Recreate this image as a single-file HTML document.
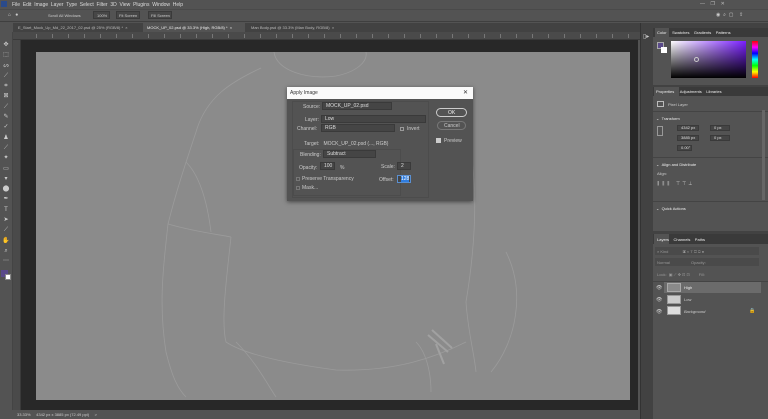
<!DOCTYPE html><html><head><style>
*{margin:0;padding:0;box-sizing:border-box}
body{width:768px;height:419px;background:#535353;position:relative;overflow:hidden;font-family:"Liberation Sans",sans-serif;font-size:5px;color:#ddd}
.a{position:absolute}
.inp{position:absolute;background:#454545;border:1px solid #3a3a3a;color:#ddd;font-size:5px;padding-left:3px;line-height:6px}
.t{position:absolute;font-size:5px;color:#ccc;white-space:nowrap}
</style></head><body>
<div class="a" style="left:0;top:0;width:768px;height:9px;background:#535353"></div>
<div class="a" style="left:1px;top:1px;width:6px;height:6px;background:#2a4a8a"></div>
<div class="t" style="left:12px;top:2px;color:#ddd">File &nbsp;Edit &nbsp;Image &nbsp;Layer &nbsp;Type &nbsp;Select &nbsp;Filter &nbsp;3D &nbsp;View &nbsp;Plugins &nbsp;Window &nbsp;Help</div>
<div class="t" style="left:700px;top:1px;color:#bbb">—&nbsp;&nbsp;&nbsp;&nbsp;❐&nbsp;&nbsp;&nbsp;&nbsp;✕</div>
<div class="a" style="left:0;top:9px;width:768px;height:13px;background:#535353;border-top:1px solid #4a4a4a;border-bottom:1px solid #3f3f3f"></div>
<div class="t" style="left:8px;top:12px">⌂ &nbsp;&nbsp;●</div>
<div class="t" style="left:48px;top:13px;font-size:4px">Scroll All Windows</div>
<div class="a" style="left:93px;top:11px;width:17px;height:8px;background:#474747;border:1px solid #3a3a3a"></div>
<div class="t" style="left:97px;top:13px;font-size:4px">100%</div>
<div class="a" style="left:116px;top:11px;width:24px;height:8px;background:#474747;border:1px solid #3a3a3a"></div>
<div class="t" style="left:119px;top:13px;font-size:4px">Fit Screen</div>
<div class="a" style="left:148px;top:11px;width:24px;height:8px;background:#474747;border:1px solid #3a3a3a"></div>
<div class="t" style="left:151px;top:13px;font-size:4px">Fill Screen</div>
<div class="t" style="left:716px;top:12px;color:#ccc">◉ &nbsp;⌕ &nbsp;▢ &nbsp;&nbsp;&nbsp;⇪</div>
<div class="a" style="left:13px;top:23px;width:627px;height:9px;background:#424242"></div>
<div class="t" style="left:18px;top:25px;font-size:4px;color:#bbb">E_Start_Mock_Up_Md_22_2017_02.psd @ 25% (RGB/8) * &nbsp;×</div>
<div class="a" style="left:143px;top:23px;width:102px;height:9px;background:#535353"></div>
<div class="t" style="left:147px;top:25px;font-size:4px;color:#eee">MOCK_UP_02.psd @ 33.3% (High, RGB/8) * &nbsp;×</div>
<div class="t" style="left:251px;top:25px;font-size:4px;color:#bbb">Man Body.psd @ 33.3% (Man Body, RGB/8) &nbsp;×</div>
<div class="a" style="left:13px;top:32px;width:627px;height:8px;background:#4a4a4a;border-bottom:1px solid #3a3a3a"></div>
<div class="a" style="left:13px;top:40px;width:8px;height:370px;background:#4a4a4a;border-right:1px solid #3a3a3a"></div>
<div class="a" style="left:21px;top:34px;width:619px;height:4px;background:repeating-linear-gradient(90deg,transparent 0 15px,#777 15px 16px)"></div>
<div class="a" style="left:21px;top:40px;width:617px;height:370px;background:#282828"></div>
<div class="a" style="left:36px;top:52px;width:594px;height:348px;background:#8b8b8b;overflow:hidden">
<svg width="594" height="348" style="position:absolute;left:0;top:0" fill="none" stroke-width="0.8" opacity="0.6">
<g stroke="#a6a6a6">
<path d="M238 0 C240 18 270 28 300 24 C320 20 332 10 330 0"/>
<path d="M225 16 C195 30 170 45 160 80 C150 110 140 140 132 172 C160 180 180 182 195 185"/>
<path d="M132 172 C128 210 122 250 130 300 C135 320 140 335 150 345"/>
<path d="M195 185 C190 230 185 270 190 290 C205 300 240 310 300 318 C360 320 400 305 430 290"/>
<path d="M150 110 C160 120 170 140 175 180"/>
<path d="M420 50 C440 90 445 160 430 250 C432 280 438 300 440 320"/>
<path d="M470 200 C490 240 480 290 455 320"/>
<path d="M200 290 C220 310 230 330 240 345"/>
<path d="M380 290 C390 300 395 320 395 340"/>
</g>
<g stroke="#b0b0b0" stroke-width="2"><path d="M392 283 L412 300 M396 278 L416 296 M400 292 L408 312"/></g>
</svg>
</div>
<div class="a" style="left:287px;top:87px;width:186px;height:114px;background:#535353;box-shadow:0 1px 4px rgba(0,0,0,.5)"></div>
<div class="a" style="left:287px;top:87px;width:186px;height:12px;background:#fafafa"></div>
<div class="t" style="left:290px;top:90px;color:#333">Apply Image</div>
<div class="t" style="left:463px;top:89px;color:#333;font-size:6px">✕</div>
<div class="a" style="left:292px;top:101px;width:137px;height:97px;border:1px solid #4c4c4c"></div>
<div class="a" style="left:293px;top:149px;width:108px;height:47px;border:1px solid #4c4c4c"></div>
<div class="t" style="left:303px;top:104px">Source:</div>
<div class="inp" style="left:322px;top:102px;width:70px;height:8px">MOCK_UP_02.psd</div>
<div class="t" style="left:305px;top:117px">Layer:</div>
<div class="inp" style="left:321px;top:115px;width:105px;height:8px">Low</div>
<div class="t" style="left:297px;top:126px">Channel:</div>
<div class="inp" style="left:321px;top:124px;width:74px;height:8px">RGB</div>
<div class="a" style="left:400px;top:127px;width:4px;height:4px;border:1px solid #999"></div>
<div class="t" style="left:407px;top:126px">Invert</div>
<div class="t" style="left:304px;top:141px">Target: &nbsp;&nbsp;MOCK_UP_02.psd (..., RGB)</div>
<div class="t" style="left:300px;top:152px">Blending:</div>
<div class="inp" style="left:323px;top:150px;width:53px;height:8px">Subtract</div>
<div class="t" style="left:299px;top:165px">Opacity:</div>
<div class="inp" style="left:320px;top:162px;width:15px;height:8px">100</div>
<div class="t" style="left:340px;top:165px">%</div>
<div class="t" style="left:381px;top:164px">Scale:</div>
<div class="inp" style="left:397px;top:162px;width:14px;height:8px">2</div>
<div class="a" style="left:296px;top:177px;width:4px;height:4px;border:1px solid #777"></div>
<div class="t" style="left:302px;top:176px">Preserve Transparency</div>
<div class="t" style="left:379px;top:177px">Offset:</div>
<div class="inp" style="left:397px;top:175px;width:14px;height:8px;border-color:#5a8fd0"><span style="background:#2f7de0;color:#fff">128</span></div>
<div class="a" style="left:296px;top:186px;width:4px;height:4px;border:1px solid #777"></div>
<div class="t" style="left:302px;top:185px">Mask...</div>
<div class="a" style="left:436px;top:108px;width:31px;height:9px;border:1px solid #ccc;border-radius:5px;background:#535353"></div>
<div class="t" style="left:448px;top:110px;color:#eee">OK</div>
<div class="a" style="left:437px;top:121px;width:29px;height:9px;border:1px solid #777;border-radius:5px"></div>
<div class="t" style="left:444px;top:123px">Cancel</div>
<div class="a" style="left:436px;top:138px;width:5px;height:5px;background:#ccc"></div>
<div class="t" style="left:444px;top:138px">Preview</div>
<div class="a" style="left:0;top:32px;width:13px;height:378px;background:#535353;border-right:1px solid #444"></div>
<div class="a" style="left:2px;top:40px;width:8px;height:260px;color:#ccc;font-size:6px;line-height:10.3px;text-align:center">✥<br>⬚<br>ᔕ<br>⟋<br>⌗<br>⊠<br>⟋<br>✎<br>✓<br>♟<br>⟋<br>✦<br>▭<br>▾<br>⬤<br>✒<br>T<br>➤<br>⟋<br>✋<br>⌕<br>⋯</div>
<div class="a" style="left:1px;top:270px;width:7px;height:7px;background:#5a4a8a"></div>
<div class="a" style="left:5px;top:274px;width:6px;height:6px;background:#fff;border:1px solid #888"></div>
<div class="a" style="left:13px;top:410px;width:627px;height:9px;background:#535353"></div>
<div class="t" style="left:17px;top:412px;font-size:4px">33.33% &nbsp;&nbsp;&nbsp;&nbsp;4342 px x 3885 px (72.49 ppi) &nbsp;&nbsp;&nbsp;&nbsp;&gt;</div>
<div class="a" style="left:640px;top:23px;width:12px;height:396px;background:#424242;border-left:1px solid #333"></div>
<div class="a" style="left:652px;top:23px;width:116px;height:396px;background:#424242"></div>
<div class="t" style="left:643px;top:33px;font-size:6px">▯▸</div>
<div class="a" style="left:653px;top:28px;width:115px;height:9px;background:#3a3a3a"></div>
<div class="a" style="left:655px;top:28px;width:14px;height:9px;background:#535353"></div>
<div class="t" style="left:657px;top:30px;font-size:4px;color:#eee">Color &nbsp;&nbsp;&nbsp;&nbsp;Swatches &nbsp;&nbsp;&nbsp;Gradients &nbsp;&nbsp;&nbsp;Patterns</div>
<div class="a" style="left:653px;top:37px;width:115px;height:48px;background:#535353"></div>
<div class="a" style="left:657px;top:42px;width:7px;height:7px;background:#5a4a8a;border:1px solid #aaa"></div>
<div class="a" style="left:661px;top:47px;width:6px;height:6px;background:#fff"></div>
<div class="a" style="left:671px;top:41px;width:75px;height:37px;background:linear-gradient(to bottom,transparent,#000),linear-gradient(to right,#fff,#7a1fff)"></div>
<div class="a" style="left:694px;top:57px;width:5px;height:5px;border:1px solid #ccc;border-radius:50%"></div>
<div class="a" style="left:752px;top:41px;width:6px;height:37px;background:linear-gradient(#f00,#f0f,#00f,#0ff,#0f0,#ff0,#f00)"></div>
<div class="a" style="left:653px;top:87px;width:115px;height:9px;background:#3a3a3a"></div>
<div class="a" style="left:654px;top:87px;width:25px;height:9px;background:#535353"></div>
<div class="t" style="left:656px;top:89px;font-size:4px;color:#eee">Properties &nbsp;&nbsp;&nbsp;&nbsp;Adjustments &nbsp;&nbsp;&nbsp;Libraries</div>
<div class="a" style="left:653px;top:96px;width:115px;height:135px;background:#535353"></div>
<div class="a" style="left:657px;top:101px;width:7px;height:6px;border:1px solid #bbb"></div>
<div class="t" style="left:668px;top:102px;font-size:4px">Pixel Layer</div>
<div class="a" style="left:653px;top:111px;width:115px;height:1px;background:#444"></div>
<div class="t" style="left:656px;top:116px;font-size:4px;color:#eee">⌄ &nbsp;Transform</div>
<div class="a" style="left:657px;top:126px;width:6px;height:10px;border:1px solid #999"></div>
<div class="inp" style="left:677px;top:125px;width:22px;height:6px;font-size:4px;line-height:4px">4342 px</div>
<div class="inp" style="left:710px;top:125px;width:20px;height:6px;font-size:4px;line-height:4px">0 px</div>
<div class="inp" style="left:677px;top:135px;width:22px;height:6px;font-size:4px;line-height:4px">3885 px</div>
<div class="inp" style="left:710px;top:135px;width:20px;height:6px;font-size:4px;line-height:4px">0 px</div>
<div class="inp" style="left:677px;top:145px;width:15px;height:6px;font-size:4px;line-height:4px">0.00°</div>
<div class="a" style="left:653px;top:157px;width:115px;height:1px;background:#444"></div>
<div class="t" style="left:656px;top:162px;font-size:4px;color:#eee">⌄ &nbsp;Align and Distribute</div>
<div class="t" style="left:657px;top:171px;font-size:4px">Align:</div>
<div class="t" style="left:657px;top:181px;font-size:5px;color:#bbb">⫼ &nbsp;⫼ &nbsp;⫼ &nbsp;&nbsp;&nbsp;&nbsp;⊤ &nbsp;⊤ &nbsp;⊥</div>
<div class="a" style="left:653px;top:201px;width:115px;height:1px;background:#444"></div>
<div class="t" style="left:656px;top:206px;font-size:4px;color:#eee">⌄ &nbsp;Quick Actions</div>
<div class="a" style="left:762px;top:110px;width:3px;height:90px;background:#666"></div>
<div class="a" style="left:653px;top:234px;width:115px;height:10px;background:#3a3a3a"></div>
<div class="a" style="left:654px;top:234px;width:15px;height:10px;background:#535353"></div>
<div class="t" style="left:657px;top:237px;font-size:4px;color:#eee">Layers &nbsp;&nbsp;&nbsp;Channels &nbsp;&nbsp;&nbsp;Paths</div>
<div class="a" style="left:653px;top:244px;width:115px;height:175px;background:#535353"></div>
<div class="a" style="left:655px;top:247px;width:104px;height:8px;background:#4a4a4a"></div>
<div class="t" style="left:657px;top:249px;font-size:4px;color:#999">⌕ Kind &nbsp;&nbsp;&nbsp;&nbsp;&nbsp;&nbsp;&nbsp;&nbsp;&nbsp;&nbsp;&nbsp;&nbsp;▣ ◐ T ▢ ⊡ ●</div>
<div class="a" style="left:655px;top:258px;width:104px;height:8px;background:#4a4a4a"></div>
<div class="t" style="left:657px;top:260px;font-size:4px;color:#999">Normal &nbsp;&nbsp;&nbsp;&nbsp;&nbsp;&nbsp;&nbsp;&nbsp;&nbsp;&nbsp;&nbsp;&nbsp;&nbsp;&nbsp;&nbsp;&nbsp;&nbsp;&nbsp;Opacity:</div>
<div class="t" style="left:657px;top:272px;font-size:4px;color:#999">Lock: &nbsp;▣ ⟋ ✥ ⊡ ⊡ &nbsp;&nbsp;&nbsp;&nbsp;&nbsp;&nbsp;&nbsp;Fill:</div>
<div class="a" style="left:653px;top:281px;width:115px;height:1px;background:#444"></div>
<div class="a" style="left:664px;top:282px;width:97px;height:11px;background:#6b6b6b"></div>
<div class="a" style="left:667px;top:283px;width:14px;height:9px;background:#8a8a8a;border:1px solid #aaa"></div>
<div class="t" style="left:684px;top:285px;font-size:4px;color:#eee">High</div>
<div class="a" style="left:667px;top:295px;width:14px;height:9px;background:#ccc;border:1px solid #999"></div>
<div class="t" style="left:684px;top:297px;font-size:4px">Low</div>
<div class="a" style="left:667px;top:306px;width:14px;height:9px;background:#ddd;border:1px solid #999"></div>
<div class="t" style="left:684px;top:309px;font-size:4px;font-style:italic">Background</div>
<div class="t" style="left:656px;top:285px;font-size:5px">👁</div>
<div class="t" style="left:656px;top:297px;font-size:5px">👁</div>
<div class="t" style="left:656px;top:309px;font-size:5px">👁</div>
<div class="t" style="left:749px;top:308px;font-size:5px">🔒</div>
</body></html>
